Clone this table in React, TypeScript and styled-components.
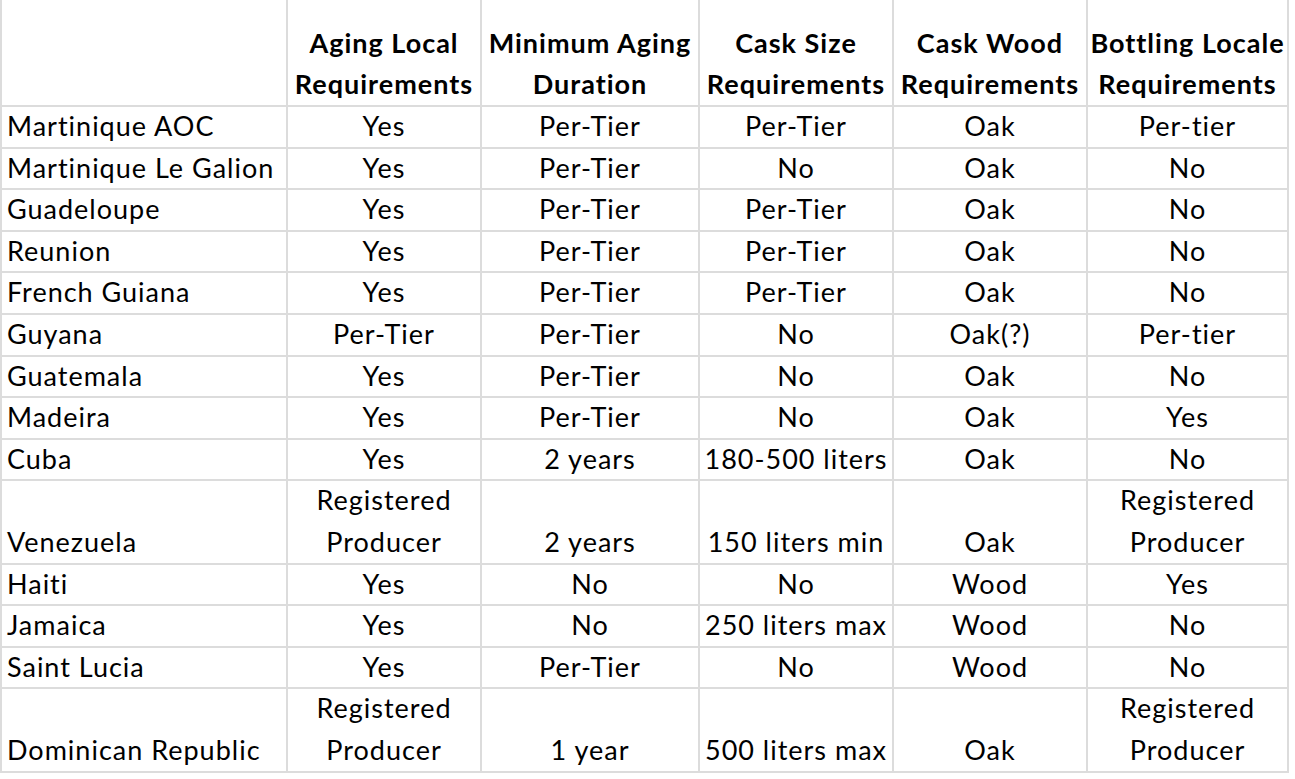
import React from 'react';
import styled, { createGlobalStyle } from 'styled-components';

const LINE = 41.6;

const GlobalStyle = createGlobalStyle`
  html, body {
    margin: 0;
    padding: 0;
    background: #ffffff;
  }
  body {
    font-family: Lato, "Liberation Sans", sans-serif;
    color: #000000;
  }
`;

const Sheet = styled.div`
  display: grid;
  grid-template-columns: 288px 194px 218px 194px 194px 201px;
  width: 1289px;
`;

const Cell = styled.div<{ $lines: number; $header?: boolean; $first?: boolean }>`
  box-sizing: border-box;
  height: ${p => (p.$header ? 107 : p.$lines * LINE)}px;
  display: flex;
  flex-direction: column;
  justify-content: flex-end;
  border-right: 2px solid #dcdcdc;
  border-bottom: 2px solid #dcdcdc;
  border-left: ${p => (p.$first ? '2px solid #dcdcdc' : 'none')};
  padding-left: ${p => (p.$first ? '5px' : '0')};
  text-align: ${p => (p.$first ? 'left' : 'center')};
  font-size: 27px;
  font-weight: ${p => (p.$header ? 700 : 400)};
  letter-spacing: 1px;
  font-variant-ligatures: none;
  line-height: ${LINE}px;
  white-space: pre-line;
  overflow: hidden;
`;

type Row = [string, string, string, string, string, string];

const headers = [
  '',
  'Aging Local\nRequirements',
  'Minimum Aging\nDuration',
  'Cask Size\nRequirements',
  'Cask Wood\nRequirements',
  'Bottling Locale\nRequirements',
];

const rows: Row[] = [
  ['Martinique AOC', 'Yes', 'Per-Tier', 'Per-Tier', 'Oak', 'Per-tier'],
  ['Martinique Le Galion', 'Yes', 'Per-Tier', 'No', 'Oak', 'No'],
  ['Guadeloupe', 'Yes', 'Per-Tier', 'Per-Tier', 'Oak', 'No'],
  ['Reunion', 'Yes', 'Per-Tier', 'Per-Tier', 'Oak', 'No'],
  ['French Guiana', 'Yes', 'Per-Tier', 'Per-Tier', 'Oak', 'No'],
  ['Guyana', 'Per-Tier', 'Per-Tier', 'No', 'Oak(?)', 'Per-tier'],
  ['Guatemala', 'Yes', 'Per-Tier', 'No', 'Oak', 'No'],
  ['Madeira', 'Yes', 'Per-Tier', 'No', 'Oak', 'Yes'],
  ['Cuba', 'Yes', '2 years', '180-500 liters', 'Oak', 'No'],
  ['Venezuela', 'Registered\nProducer', '2 years', '150 liters min', 'Oak', 'Registered\nProducer'],
  ['Haiti', 'Yes', 'No', 'No', 'Wood', 'Yes'],
  ['Jamaica', 'Yes', 'No', '250 liters max', 'Wood', 'No'],
  ['Saint Lucia', 'Yes', 'Per-Tier', 'No', 'Wood', 'No'],
  ['Dominican Republic', 'Registered\nProducer', '1 year', '500 liters max', 'Oak', 'Registered\nProducer'],
];

// a row is as tall as its longest cell (wrapped lines)
const lineCount = (row: Row) => Math.max(...row.map(v => v.split('\n').length));

export default function App() {
  return (
    <>
      <GlobalStyle />
      <Sheet>
        {headers.map((h, i) => (
          <Cell key={`h${i}`} $lines={2} $header $first={i === 0}>
            {h}
          </Cell>
        ))}
        {rows.map(row => {
          const lines = lineCount(row);
          return row.map((v, i) => (
            <Cell key={`${row[0]}-${i}`} $lines={lines} $first={i === 0}>
              {v}
            </Cell>
          ));
        })}
      </Sheet>
    </>
  );
}
